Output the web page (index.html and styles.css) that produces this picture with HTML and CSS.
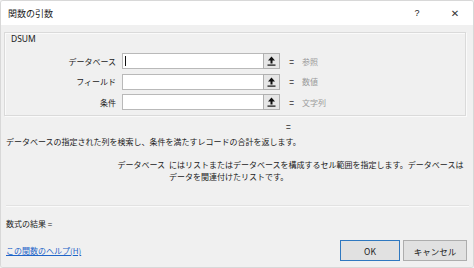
FILE: index.html
```html
<!DOCTYPE html>
<html lang="ja">
<head>
<meta charset="utf-8">
<link rel="stylesheet" href="styles.css">
</head>
<body>
<div class="dialog">
  <div class="titlebar">
    <span class="title">関数の引数</span>
    <span class="help">?</span>
    <span class="close">✕</span>
  </div>
  <div class="content">
    <div class="group">
      <div class="group-label">DSUM</div>
      <div class="args">
        <div class="arg-label">データベース</div>
        <div class="field"><div class="input"><span class="caret"></span></div><div class="pick"><svg width="9" height="10" viewBox="0 0 9 10"><path d="M4.5 0.5 L8 4.5 L5.5 4.5 L5.5 7.5 L3.5 7.5 L3.5 4.5 L1 4.5 Z" fill="#111"/><rect x="0.5" y="8.5" width="8" height="1.2" fill="#111"/></svg></div></div>
        <div class="eq">=</div>
        <div class="val">参照</div>

        <div class="arg-label">フィールド</div>
        <div class="field"><div class="input"></div><div class="pick"><svg width="9" height="10" viewBox="0 0 9 10"><path d="M4.5 0.5 L8 4.5 L5.5 4.5 L5.5 7.5 L3.5 7.5 L3.5 4.5 L1 4.5 Z" fill="#111"/><rect x="0.5" y="8.5" width="8" height="1.2" fill="#111"/></svg></div></div>
        <div class="eq">=</div>
        <div class="val">数値</div>

        <div class="arg-label">条件</div>
        <div class="field"><div class="input"></div><div class="pick"><svg width="9" height="10" viewBox="0 0 9 10"><path d="M4.5 0.5 L8 4.5 L5.5 4.5 L5.5 7.5 L3.5 7.5 L3.5 4.5 L1 4.5 Z" fill="#111"/><rect x="0.5" y="8.5" width="8" height="1.2" fill="#111"/></svg></div></div>
        <div class="eq">=</div>
        <div class="val">文字列</div>
      </div>
    </div>
    <div class="result-eq">=</div>
    <div class="desc">データベースの指定された列を検索し、条件を満たすレコードの合計を返します。</div>
    <div class="argdesc">
      <div class="argdesc-name">データベース</div>
      <div class="argdesc-text">にはリストまたはデータベースを構成するセル範囲を指定します。データベースは<br>データを関連付けたリストです。</div>
    </div>
    <div class="sep"></div>
    <div class="formula">数式の結果 =</div>
    <div class="footer">
      <a class="helplink" href="#">この関数のヘルプ(H)</a>
      <div class="buttons">
        <button class="btn ok">OK</button>
        <button class="btn">キャンセル</button>
      </div>
    </div>
  </div>
</div>
</body>
</html>
```
FILE: styles.css
```css
* { box-sizing: border-box; }
html, body { margin: 0; padding: 0; }
body {
  width: 474px;
  height: 268px;
  overflow: hidden;
  font-family: "Noto Sans CJK JP", "Noto Sans", sans-serif;
  font-size: 8px;
  color: #1a1a1a;
  background: #f0f0f0;
}
.dialog {
  width: 474px;
  height: 268px;
  display: flex;
  flex-direction: column;
  border: 1px solid #d8d8d8;
  border-radius: 3px;
  overflow: hidden;
}
.titlebar {
  height: 24px;
  background: #ffffff;
  display: flex;
  align-items: center;
  padding-left: 7px;
  flex-shrink: 0;
}
.title { font-size: 9px; flex: 1; }
.help {
  font-size: 9px;
  width: 10px;
  text-align: center;
  margin-right: 23px;
  font-family: "Liberation Sans", sans-serif;
}
.close {
  font-size: 10px;
  width: 20px;
  text-align: center;
  margin-right: 8px;
  font-family: "DejaVu Sans", sans-serif;
  color: #333;
}
.content {
  flex: 1;
  background: #f0f0f0;
  padding: 7px 5px 0 3px;
  display: flex;
  flex-direction: column;
}
.group {
  width: 462px;
  height: 84px;
  border: 1px solid #dadada;
  box-shadow: inset 1px 1px 0 #fafafa, 1px 1px 0 #fafafa;
  flex-shrink: 0;
}
.group-label {
  font-size: 8.5px;
  font-family: "Noto Sans", sans-serif;
  padding-left: 6px;
  line-height: 10px;
  margin-top: 1px;
}
.args {
  margin-top: 9px;
  display: grid;
  grid-template-columns: 117px 158px 21px auto;
  grid-auto-rows: 16px;
  row-gap: 4.5px;
  align-items: center;
}
.arg-label { text-align: right; padding-right: 6px; }
.field { display: flex; height: 16px; }
.input {
  width: 141px;
  height: 16px;
  background: #fff;
  border: 1px solid #b9b9b9;
  border-right: none;
  position: relative;
}
.caret {
  position: absolute;
  left: 2px;
  top: 2px;
  width: 1px;
  height: 10px;
  background: #111;
}
.pick {
  width: 17px;
  height: 16px;
  border: 1px solid #b0b0b0;
  background: #e6e6e6;
  display: flex;
  align-items: center;
  justify-content: center;
}
.eq { text-align: center; padding-left: 2px; color: #333; font-weight: bold; }
.val { color: #9a9a9a; padding-left: 1px; }
.result-eq { margin-left: 282px; margin-top: 6px; line-height: 10px; font-weight: bold; color: #333; }
.desc { margin-top: 4px; margin-left: 2px; line-height: 12px; }
.argdesc { display: flex; margin-top: 11px; line-height: 12px; }
.argdesc-name { width: 165px; text-align: right; padding-right: 4px; flex-shrink: 0; }
.argdesc-text { white-space: nowrap; }
.sep {
  margin-top: 22px;
  margin-left: 2px;
  width: 463px;
  height: 1px;
  flex-shrink: 0;
  background: #e2e2e2;
  box-shadow: 0 1px 0 #fafafa;
}
.formula { margin-top: 12px; margin-left: 2px; line-height: 12px; }
.footer {
  margin-top: 10px;
  display: flex;
  align-items: center;
  justify-content: space-between;
}
.helplink { margin-left: 2px; color: #1e64c8; text-decoration: underline; font-size: 8px; }
.buttons { display: flex; gap: 3px; margin-right: 1px; }
.btn {
  font-family: "Noto Sans CJK JP", "Noto Sans", sans-serif;
  font-size: 8.5px;
  color: #1a1a1a;
  height: 21px;
  width: 64px;
  background: #e1e1e1;
  border: 1px solid #adadad;
  padding: 0;
}
.btn.ok { width: 60px; border: 1.5px solid #2f78c0; }
```
